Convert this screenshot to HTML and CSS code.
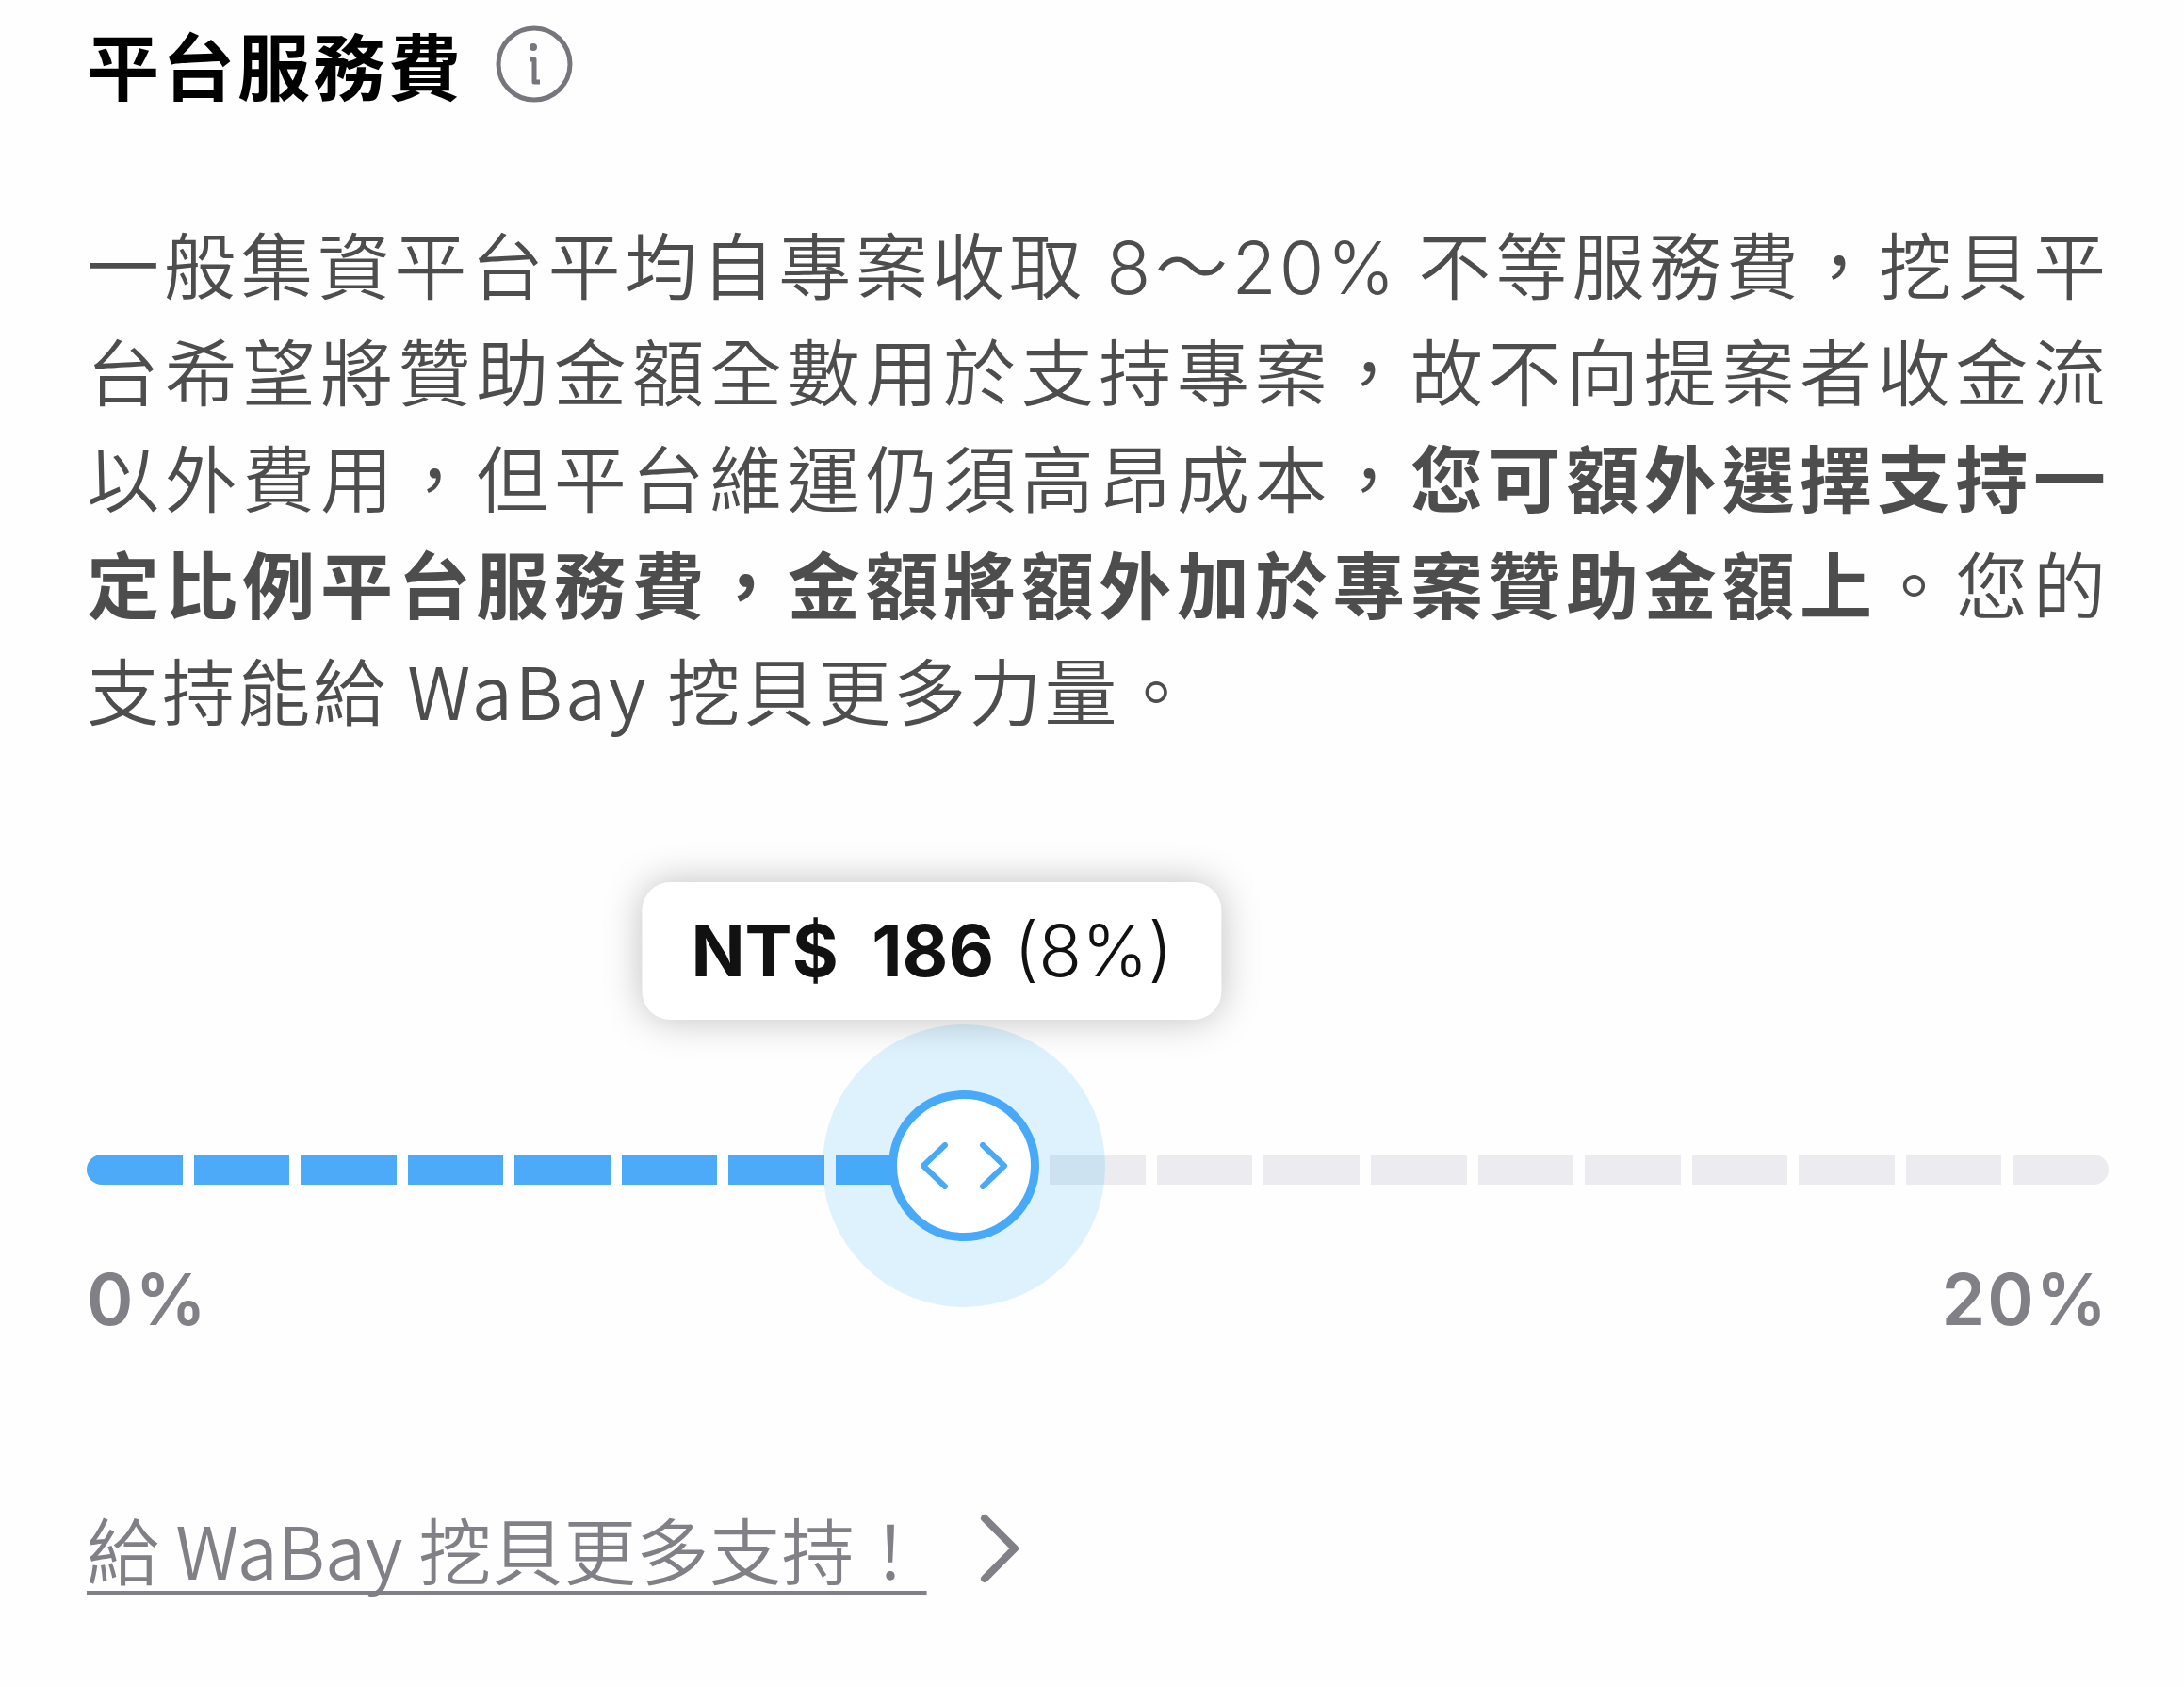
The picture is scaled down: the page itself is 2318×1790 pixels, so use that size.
FILE: index.html
```html
<!DOCTYPE html>
<html lang="zh-Hant-TW">
<head>
<meta charset="utf-8">
<meta name="viewport" content="width=device-width, initial-scale=1">
<title>平台服務費</title>
<link rel="stylesheet" href="styles.css">
</head>
<body>
<main class="fee">
  <header class="fee-header">
    <h1 class="fee-title" id="fee-title">平台服務費</h1>
    <button class="info-button" type="button" aria-label="說明">
      <svg class="info-icon" viewBox="0 0 82 82" fill="none" stroke="currentColor" aria-hidden="true">
        <circle cx="41" cy="41" r="38" stroke-width="5"/>
        <circle cx="40" cy="23" r="4" fill="currentColor" stroke="none"/>
        <path d="M36 36h5v24h6" stroke-width="5" stroke-linejoin="round"/>
      </svg>
    </button>
  </header>

  <p class="fee-text">一般集資平台平均自專案收取 <span class="latin">8～20%</span> 不等服務費，挖貝平台希望將贊助金額全數用於支持專案，故不向提案者收金流以外費用，但平台維運仍須高昂成本，<strong>您可額外選擇支持一定比例平台服務費，金額將額外加於專案贊助金額上</strong>。您的支持能給 WaBay 挖貝更多力量。</p>

  <div class="slider">
    <div class="track">
      <span class="segment on"></span><span class="segment on"></span><span class="segment on"></span><span class="segment on"></span><span class="segment on"></span><span class="segment on"></span><span class="segment on"></span><span class="segment on"></span><span class="segment"></span><span class="segment"></span><span class="segment"></span><span class="segment"></span><span class="segment"></span><span class="segment"></span><span class="segment"></span><span class="segment"></span><span class="segment"></span><span class="segment"></span><span class="segment"></span>
    </div>
    <div class="handle" style="left: 43.4%">
      <svg class="handle-icon" viewBox="0 0 94 50" fill="none" stroke="currentColor" stroke-width="6" stroke-linecap="round" stroke-linejoin="round" aria-hidden="true">
        <path d="M27 3 4 25l23 22M67 3l23 22-23 22"/>
      </svg>
    </div>
    <output class="tooltip" for="fee-range" style="left: 41.8%"><b class="amount">NT$&nbsp; 186</b> (8%)</output>
    <input class="range" id="fee-range" type="range" min="0" max="20" value="8" aria-labelledby="fee-title">
  </div>
  <div class="scale"><span>0%</span><span>20%</span></div>

  <a class="more" href="#">
    <span class="more-text">給 WaBay 挖貝更多支持！</span>
    <svg class="more-icon" viewBox="0 0 42 74" fill="none" stroke="currentColor" stroke-width="8" stroke-linecap="round" stroke-linejoin="round" aria-hidden="true">
      <path d="M5 5l32 32L5 69"/>
    </svg>
  </a>
</main>
</body>
</html>
```

FILE: styles.css
```css
* {
  box-sizing: border-box;
}

body {
  margin: 0;
  background: #fefefe;
  color: #4d4d4d;
  font-family: "Noto Sans CJK TC", sans-serif;
  font-size: 77px;
  line-height: 112px;
}

.fee {
  padding: 12px 80px 80px 92px;
}

.fee-header {
  display: flex;
  align-items: center;
  gap: 34px;
}

.fee-title {
  margin: 0;
  color: #000;
  font-size: 77px;
  font-weight: 700;
  letter-spacing: 3px;
}

.info-button {
  display: block;
  padding: 0;
  border: 0;
  background: none;
  color: #77767d;
}

.info-icon {
  display: block;
  width: 82px;
  height: 82px;
}

.fee-text {
  margin: 98px 0 0;
  font-weight: 350;
  line-height: 113px;
  letter-spacing: 3px;
  text-align: justify;
}

.fee-text strong {
  font-weight: 700;
}

.latin {
  font-family: Inter, "Noto Sans CJK TC", sans-serif;
  line-height: 1;
}

.slider {
  position: relative;
  margin-top: 438px;
}

.track {
  display: grid;
  grid-template-columns: repeat(19, 1fr);
  gap: 12px;
  height: 32px;
  border-radius: 16px;
  overflow: hidden;
}

.segment {
  background: #ebebf0;
}

.segment.on {
  background: #4daaf8;
}

.handle {
  position: absolute;
  top: 12px;
  display: grid;
  place-items: center;
  width: 160px;
  height: 160px;
  border: 9px solid #47a9f8;
  border-radius: 50%;
  background: #fff;
  box-shadow: 0 0 0 70px rgba(35, 172, 250, 0.15);
  color: #47a9f8;
  transform: translate(-50%, -50%);
}

.handle-icon {
  width: 94px;
  height: 50px;
}

.tooltip {
  position: absolute;
  bottom: 175px;
  padding: 16px 52px;
  border-radius: 30px;
  background: #fff;
  box-shadow: 0 0 40px rgba(0, 0, 0, 0.25);
  color: #111;
  font-family: Inter, sans-serif;
  font-size: 75px;
  font-weight: 350;
  line-height: 114px;
  white-space: nowrap;
  transform: translateX(-50%);
}

.amount {
  font-weight: 700;
}

.range {
  position: absolute;
  inset: -64px 0;
  width: 100%;
  height: 160px;
  margin: 0;
  opacity: 0;
  cursor: pointer;
}

.scale {
  display: flex;
  justify-content: space-between;
  margin-top: 66px;
  color: #818087;
  font-family: Inter, sans-serif;
  font-size: 75px;
  font-weight: 600;
  letter-spacing: 2px;
}

.more {
  display: inline-flex;
  align-items: center;
  gap: 56px;
  margin-top: 152px;
  color: #818087;
  font-weight: 350;
  text-decoration: none;
}

.more-text {
  text-decoration: underline;
  text-decoration-thickness: 4px;
  text-underline-offset: 12px;
  text-decoration-skip-ink: none;
}

.more-icon {
  width: 42px;
  height: 74px;
}
```
